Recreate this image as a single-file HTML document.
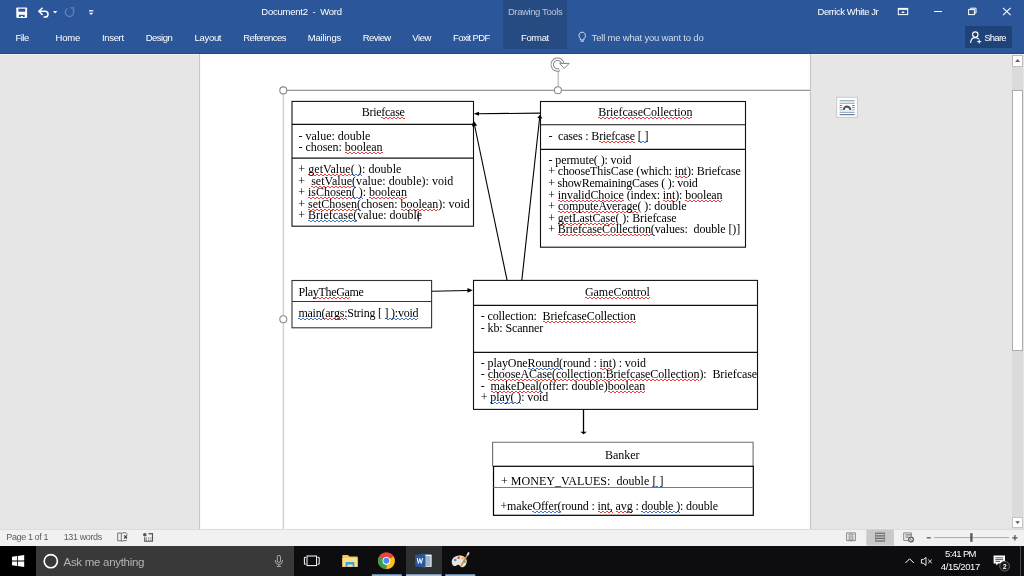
<!DOCTYPE html>
<html><head><meta charset="utf-8">
<style>
*{margin:0;padding:0;box-sizing:border-box}
html,body{width:1024px;height:576px;overflow:hidden;background:#e6e6e6;font-family:"Liberation Sans",sans-serif}
#ribbon{position:absolute;left:0;top:0;width:1024px;height:54px;background:linear-gradient(#2b579a 0,#2b579a 52.5px,#224a8b 52.9px,#224a8b 53.5px,#cfd6e2 54px)}
#hl{position:absolute;left:0;top:54px;width:1024px;height:1px;background:#f0f1f3}
#ribbon .t{position:absolute;color:#fff;font-size:9.5px;white-space:pre;line-height:12px}
#dt{position:absolute;left:503px;top:0;width:64px;height:48.5px;background:#264a82}
#share{position:absolute;left:965.2px;top:26.3px;width:46.6px;height:21.4px;background:#1f4378}
#page{position:absolute;left:200px;top:54px;width:610px;height:476px;background:#fff}
#status{position:absolute;left:0;top:529px;width:1024px;height:17px;background:#f1f1f1;border-top:1px solid #dcdcdc}
#status .t,#task .t{position:absolute;white-space:pre;line-height:12px;font-family:"Liberation Sans",sans-serif}
#task{position:absolute;left:0;top:546px;width:1024px;height:30px;background:#0d0d0f}
#start{position:absolute;left:0;top:0;width:36px;height:30px;background:#000}
#search{position:absolute;left:36px;top:0;width:258px;height:30px;background:#393939}
#wordbtn{position:absolute;left:406px;top:0;width:35.5px;height:30px;background:#2e2f31}
.uml{position:absolute;font-family:"Liberation Serif",serif;font-size:12px;line-height:12px;color:#000;white-space:pre}
.r{background:repeating-linear-gradient(90deg,#e2453c 0,#e2453c 2px,transparent 2px,transparent 4px) 0 12px/4px 1px repeat-x,repeating-linear-gradient(90deg,transparent 0,transparent 2px,#e2453c 2px,#e2453c 4px) 0 13px/4px 1px repeat-x}
.b{background:repeating-linear-gradient(90deg,#3f74d8 0,#3f74d8 2px,transparent 2px,transparent 4px) 0 12px/4px 1px repeat-x,repeating-linear-gradient(90deg,transparent 0,transparent 2px,#3f74d8 2px,#3f74d8 4px) 0 13px/4px 1px repeat-x}
svg{position:absolute;left:0;top:0}
#umltext,#ribbon,#status,#task{will-change:transform}
</style></head><body>
<div id="ribbon">
<div id="dt"></div>
<div id="share"></div>
<svg width="1024" height="54" viewBox="0 0 1024 54" id="rib">
<!-- save -->
<rect x="16.3" y="7.5" width="10.8" height="10.4" rx="0.8" fill="#fff"/>
<rect x="18.4" y="8.7" width="6.8" height="3" fill="#2b579a"/>
<rect x="18.9" y="14.8" width="5.8" height="2.2" fill="#2b579a"/>
<rect x="20.9" y="16" width="1.8" height="1" fill="#fff"/>
<!-- undo -->
<path d="M38.8 11.3 H45 A3 2.9 0 0 1 45 17.1 H43.6" fill="none" stroke="#fff" stroke-width="1.5"/>
<path d="M42.6 7.7 L38.9 11.3 L42.6 14.9" fill="none" stroke="#fff" stroke-width="1.5"/>
<path d="M53 10.9 H57.2 L55.1 13.6 Z" fill="#fff"/>
<!-- redo dim -->
<path d="M72.9 9.9 A4.2 4.2 0 1 1 67.6 8.5" fill="none" stroke="#5f80ba" stroke-width="1.3"/>
<path d="M70.2 7.8 H73.6 V11.2" fill="none" stroke="#5f80ba" stroke-width="1.3"/>
<!-- customize -->
<path d="M89 10.8 H93.3" stroke="#fff" stroke-width="1.2" fill="none"/>
<path d="M89 12.8 H93.3 L91.15 15.1 Z" fill="#fff"/>
<!-- ribbon display options -->
<rect x="898.3" y="8.4" width="9.4" height="6.2" fill="none" stroke="#fff" stroke-width="1"/>
<rect x="898" y="8" width="10" height="1.8" fill="#fff"/>
<path d="M901.2 12.9 L903 11 L904.8 12.9 Z" fill="#fff"/>
<!-- minimize -->
<path d="M934 11.5 H942" stroke="#fff" stroke-width="1"/>
<!-- restore -->
<rect x="968.6" y="9.6" width="5.8" height="5" fill="none" stroke="#fff" stroke-width="1"/>
<path d="M970.4 9.6 V8.2 H976 V13 H974.4" fill="none" stroke="#fff" stroke-width="1"/>
<!-- close -->
<path d="M1003 7.9 L1010.6 15.1 M1010.6 7.9 L1003 15.1" stroke="#fff" stroke-width="1.1" fill="none"/>
<!-- lightbulb -->
<path d="M580.4 38.6 C578 36.8 578.6 32.2 582.2 32.2 C585.8 32.2 586.4 36.8 584 38.6 V40 H580.4 Z" fill="none" stroke="#e6ecf6" stroke-width="0.9"/>
<path d="M580.7 41.3 H583.7" stroke="#e6ecf6" stroke-width="0.9"/>
<!-- share person -->
<circle cx="975.3" cy="34.6" r="2.7" fill="none" stroke="#fff" stroke-width="1.1"/>
<path d="M970.6 43 C970.8 39 973 37.6 975.3 37.6 C976.8 37.6 978 38.2 978.8 39.2" fill="none" stroke="#fff" stroke-width="1.1"/>
<path d="M977.2 41.6 H981.2 M979.2 39.6 V43.6" stroke="#fff" stroke-width="1" fill="none"/>
</svg>
<!--RT-->
<div class="t" style="left:261.3px;top:6.0px;font-size:9.5px;color:#fff;letter-spacing:-0.246px">Document2  -  Word</div>
<div class="t" style="left:507.9px;top:6.0px;font-size:9.5px;color:#b7c5dd;letter-spacing:-0.392px">Drawing Tools</div>
<div class="t" style="left:817.5px;top:6.1px;font-size:9.5px;color:#fff;letter-spacing:-0.423px">Derrick White Jr</div>
<div class="t" style="left:15.5px;top:31.9px;font-size:9.5px;color:#fff;letter-spacing:-0.528px">File</div>
<div class="t" style="left:55.5px;top:31.9px;font-size:9.5px;color:#fff;letter-spacing:-0.161px">Home</div>
<div class="t" style="left:102.0px;top:31.9px;font-size:9.5px;color:#fff;letter-spacing:-0.344px">Insert</div>
<div class="t" style="left:145.7px;top:31.9px;font-size:9.5px;color:#fff;letter-spacing:-0.513px">Design</div>
<div class="t" style="left:194.5px;top:31.9px;font-size:9.5px;color:#fff;letter-spacing:-0.305px">Layout</div>
<div class="t" style="left:243.2px;top:31.9px;font-size:9.5px;color:#fff;letter-spacing:-0.599px">References</div>
<div class="t" style="left:307.7px;top:31.9px;font-size:9.5px;color:#fff;letter-spacing:-0.170px">Mailings</div>
<div class="t" style="left:362.8px;top:31.9px;font-size:9.5px;color:#fff;letter-spacing:-0.543px">Review</div>
<div class="t" style="left:412.3px;top:31.9px;font-size:9.5px;color:#fff;letter-spacing:-0.455px">View</div>
<div class="t" style="left:453.1px;top:31.9px;font-size:9.5px;color:#fff;letter-spacing:-0.626px">Foxit PDF</div>
<div class="t" style="left:521.0px;top:31.9px;font-size:9.5px;color:#fff;letter-spacing:-0.382px">Format</div>
<div class="t" style="left:591.6px;top:31.9px;font-size:9.5px;color:#d3dcec;letter-spacing:-0.198px">Tell me what you want to do</div>
<div class="t" style="left:984.2px;top:32.1px;font-size:9.5px;color:#fff;letter-spacing:-0.732px">Share</div>
<!--/RT-->
</div>
<div id="hl"></div>
<div id="page"></div>

<svg width="1024" height="576" viewBox="0 0 1024 576" id="dia">
<path d="M199.6 54 V529 M810.4 54 V529" stroke="#bdbdbd" stroke-width="0.9"/>
<!-- canvas selection frame -->
<line x1="283" y1="90.4" x2="810" y2="90.4" stroke="#959595" stroke-width="1.1"/>
<line x1="283.4" y1="90" x2="283.4" y2="529" stroke="#d2d2d2" stroke-width="1.5"/>
<line x1="558.2" y1="71" x2="558.2" y2="87" stroke="#a8a8a8" stroke-width="1"/>
<circle cx="283.3" cy="90.4" r="3.5" fill="#fff" stroke="#8a8a8a" stroke-width="1.1"/>
<circle cx="557.9" cy="90.3" r="3.5" fill="#fff" stroke="#8a8a8a" stroke-width="1.1"/>
<circle cx="283.3" cy="319.3" r="3.5" fill="#fff" stroke="#8a8a8a" stroke-width="1.1"/>
<!-- rotate handle -->
<path d="M562.98 64.1 A5.4 5.4 0 1 0 559.45 69.67" fill="none" stroke="#858585" stroke-width="3.4"/>
<path d="M562.98 64.1 A5.4 5.4 0 1 0 559.45 69.67" fill="none" stroke="#fff" stroke-width="1.5"/>
<path d="M559.6 63.4 H569.2 L564.3 68.4 Z" fill="#fff" stroke="#858585" stroke-width="1"/>
<!-- text cursor -->
<path d="M418.3 211 V221.4" stroke="#000" stroke-width="0.9"/>
<!-- layout options icon -->
<rect x="836.7" y="97.3" width="20.7" height="20.1" fill="#fff" stroke="#c8c8c8" stroke-width="1"/>
<rect x="839.6" y="100.6" width="15.1" height="2.8" fill="#d6eef2"/>
<rect x="839.6" y="110.2" width="15.1" height="2.2" fill="#d6eef2"/>
<path d="M839.6 100.6 H854.7" stroke="#8fa0b6" stroke-width="0.9"/>
<path d="M839.6 103.4 H854.7" stroke="#9aa6b4" stroke-width="0.9"/>
<path d="M839.6 105.5 H842.2 M852.2 105.5 H854.7 M839.6 107.6 H842.2 M852.2 107.6 H854.7" stroke="#4d6a96" stroke-width="0.9"/>
<path d="M839.6 109.7 H842.2 M852.2 109.7 H854.7" stroke="#a0a8b4" stroke-width="0.9"/>
<path d="M839.6 112.5 H854.7" stroke="#9aa6b4" stroke-width="0.9"/>
<path d="M839.6 114.7 H854.7" stroke="#44628f" stroke-width="1"/>
<path d="M843.7 109.9 A3.3 3.3 0 0 1 850.3 109.9" fill="none" stroke="#555" stroke-width="2.1"/>
<!-- scrollbar -->
<rect x="1012" y="55" width="11" height="474" fill="#dbdbdb"/>
<rect x="1012.6" y="55.6" width="9.9" height="10.9" fill="#fff" stroke="#b0b0b0" stroke-width="0.8"/>
<path d="M1015.1 61.9 L1017.6 58.9 L1020.1 61.9 Z" fill="#606060"/>
<rect x="1012.5" y="90.5" width="10" height="260" fill="#fff" stroke="#ababab" stroke-width="1"/>
<rect x="1012.5" y="517.5" width="10" height="10" fill="#fff" stroke="#c4c4c4" stroke-width="1"/>
<path d="M1015.2 521.2 L1017.6 524 L1020 521.2 Z" fill="#606060"/>
<!-- Briefcase -->
<g fill="none" stroke="#111" stroke-width="1.1">
<rect x="292" y="101.4" width="181.5" height="124.8"/>
<line x1="292" y1="124.4" x2="473.5" y2="124.4"/>
<line x1="292" y1="158.1" x2="473.5" y2="158.1"/>
<!-- BriefcaseCollection -->
<rect x="540.5" y="101.5" width="205" height="145.7"/>
<line x1="540.5" y1="124.8" x2="745.5" y2="124.8"/>
<line x1="540.5" y1="149.4" x2="745.5" y2="149.4"/>
<!-- PlayTheGame -->
<rect x="292" y="280.5" width="139.6" height="47.3" stroke="#333"/>
<line x1="292" y1="301.5" x2="431.6" y2="301.5" stroke="#333"/>
<!-- GameControl -->
<rect x="473.5" y="280.4" width="284" height="129"/>
<line x1="473.5" y1="305.4" x2="757.5" y2="305.4"/>
<line x1="473.5" y1="352.4" x2="757.5" y2="352.4"/>
</g>
<!-- Banker -->
<path d="M492.6 466.2 V442.3 H753.1 V466.2" fill="none" stroke="#6e6e6e" stroke-width="1.1"/>
<rect x="493.5" y="466.3" width="259.8" height="49" fill="none" stroke="#000" stroke-width="1.2"/>
<line x1="493.5" y1="487.5" x2="753.3" y2="487.5" stroke="#7a7a7a" stroke-width="1"/>
<!-- arrows -->
<g stroke="#000" stroke-width="1.1" fill="#000">
<line x1="540.5" y1="113.1" x2="477" y2="113.75"/>
<path d="M473.7 113.75 L479 111.8 L479 115.7 Z" stroke="none"/>
<line x1="507.1" y1="280.4" x2="474.5" y2="125"/>
<path d="M473.5 120.6 L477.1 125.5 L471.9 126.5 Z" stroke="none"/>
<line x1="521.8" y1="280.4" x2="539.6" y2="118"/>
<path d="M540.1 114.5 L542.3 118.6 L537.3 118.1 Z" stroke="none"/>
<line x1="431.6" y1="291.2" x2="468" y2="290.45"/>
<path d="M472.7 290.35 L467.4 288.1 L467.5 292.7 Z" stroke="none"/>
<line x1="583.5" y1="409.5" x2="583.5" y2="432.4" stroke-width="1.3"/>
<path d="M580.3 431.7 H586.9 L583.6 434.3 Z" stroke="none"/>
</g>
</svg>
<div id="umltext">
<!--UT-->
<div class="uml" style="left:361.8px;top:106.0px;letter-spacing:-0.281px">Brie<span class="r">fcase</span></div>
<div class="uml" style="left:298.6px;top:130.0px;letter-spacing:-0.019px">- value: double</div>
<div class="uml" style="left:298.6px;top:141.0px;letter-spacing:-0.044px">- chosen: <span class="r">boolean</span></div>
<div class="uml" style="left:298.3px;top:163.0px;letter-spacing:0.068px">+ <span class="r">getValue</span><span class="b">( )</span>: double</div>
<div class="uml" style="left:298.3px;top:175.0px;letter-spacing:0.031px">+  <span class="r">setValue</span><span class="b">(</span>value: double): void</div>
<div class="uml" style="left:298.3px;top:186.0px;letter-spacing:-0.025px">+ <span class="r">isChosen</span><span class="b">( )</span>: <span class="r">boolean</span></div>
<div class="uml" style="left:298.3px;top:198.0px;letter-spacing:-0.028px">+ <span class="r">setChosen</span><span class="b">(</span>chosen: <span class="r">boolean</span>): void</div>
<div class="uml" style="left:298.3px;top:209.0px;letter-spacing:-0.007px">+ <span class="b">Briefcase(</span>value: double</div>
<div class="uml" style="left:598.2px;top:106.0px;letter-spacing:-0.058px"><span class="r">BriefcaseCollection</span></div>
<div class="uml" style="left:548.6px;top:130.0px;letter-spacing:-0.178px">-  cases : B<span class="r">riefcase</span> <span class="b">[ ]</span></div>
<div class="uml" style="left:548.6px;top:154.0px;letter-spacing:-0.116px">- permute( ): void</div>
<div class="uml" style="left:548.3px;top:165.0px;letter-spacing:-0.158px">+ chooseThisCase (which: <span class="r">int</span>): Briefcase</div>
<div class="uml" style="left:548.3px;top:177.0px;letter-spacing:-0.277px">+ showRemainingCases ( ): void</div>
<div class="uml" style="left:548.3px;top:189.0px;letter-spacing:-0.106px">+ <span class="r">invalidChoice</span> (index: <span class="r">int</span>): <span class="r">boolean</span></div>
<div class="uml" style="left:548.3px;top:200.0px;letter-spacing:-0.102px">+ <span class="r">computeAverage</span>( ): double</div>
<div class="uml" style="left:548.3px;top:212.0px;letter-spacing:-0.103px">+ <span class="r">getLastCase</span>( ): Briefcase</div>
<div class="uml" style="left:548.3px;top:223.0px;letter-spacing:-0.122px">+ <span class="r">BriefcaseCollection</span><span class="b">(</span>values:  double [)]</div>
<div class="uml" style="left:298.4px;top:286.0px;letter-spacing:-0.316px">Pla<span class="r">yTheGa</span>me</div>
<div class="uml" style="left:298.4px;top:307.0px;letter-spacing:-0.227px"><span class="b">main(</span><span class="r">args</span><span class="b">:</span>String [ <span class="b">] ):void</span></div>
<div class="uml" style="left:584.9px;top:286.0px;letter-spacing:-0.030px"><span class="r">GameControl</span></div>
<div class="uml" style="left:480.8px;top:310.0px;letter-spacing:-0.125px">- collection:  <span class="r">BriefcaseCollection</span></div>
<div class="uml" style="left:480.8px;top:322.0px;letter-spacing:-0.122px">- kb: Scanner</div>
<div class="uml" style="left:480.8px;top:357.0px;letter-spacing:-0.098px">- playOne<span class="b">Round(</span>round : <span class="r">int</span>) : void</div>
<div class="uml" style="left:480.8px;top:368.0px;letter-spacing:-0.083px">- <span class="r">chooseACase(collection:BriefcaseCollection</span>):  Briefcase</div>
<div class="uml" style="left:480.8px;top:380.0px;letter-spacing:-0.071px">-  <span class="r">makeDeal</span><span class="b">(</span>offer: double)<span class="r">boolean</span></div>
<div class="uml" style="left:480.8px;top:391.0px;letter-spacing:-0.114px">+ <span class="b">play( )</span>: void</div>
<div class="uml" style="left:605.1px;top:449.0px;letter-spacing:-0.059px">Banker</div>
<div class="uml" style="left:501.0px;top:475.0px;letter-spacing:0.035px">+ MONEY_VALUES:  double <span class="b">[ ]</span></div>
<div class="uml" style="left:500.4px;top:500.0px;letter-spacing:-0.139px">+make<span class="b">Offer(</span>round : <span class="r">int,</span> <span class="r">avg</span> : <span class="b">double )</span>: double</div>
<!--/UT-->
</div>
<div id="status">
<svg width="1024" height="17" viewBox="0 529 1024 17" style="top:-1px">
<!-- proofing book -->
<g fill="none" stroke="#666" stroke-width="0.9">
<path d="M117.7 533 H121.3 V540.8 H117.7 Z"/>
<path d="M121.3 540.8 L122 541.6 L122.8 540.6 H126.8"/>
<path d="M121.6 533.4 Q124 532 126.4 533 Q127 533.4 127 534.6"/>
<path d="M124.2 535.4 L127 538.5 M127 535.4 L124.2 538.5" stroke="#444" stroke-width="1.25"/>
</g>
<!-- macro -->
<circle cx="144.8" cy="534.7" r="1.8" fill="#555"/>
<rect x="148.5" y="533.1" width="4.5" height="1.3" fill="#555"/>
<path d="M144.7 537.2 V541.3 H152.5 V533.6" fill="none" stroke="#555" stroke-width="1.1"/>
<g fill="#555"><rect x="146" y="537.5" width="1" height="1.1"/><rect x="148.2" y="537.5" width="1" height="1.1"/><rect x="150.4" y="537.5" width="1" height="1.1"/><rect x="146" y="539.6" width="1" height="1.1"/><rect x="148.2" y="539.6" width="1" height="1.1"/><rect x="150.4" y="539.6" width="1" height="1.1"/></g>
<!-- read mode -->
<g fill="none" stroke="#7a7a7a" stroke-width="0.9">
<path d="M846.6 532.9 H855.4 V540.6 H846.6 Z"/>
<path d="M851 532.9 V541.6"/>
<path d="M848.4 534.8 H850 M848.4 537 H850 M848.4 539.1 H850 M852 534.8 H853.6 M852 537 H853.6 M852 539.1 H853.6" stroke="#5a5a5a" stroke-width="0.9"/>
</g>
<!-- print layout selected -->
<rect x="866.3" y="529.6" width="27.6" height="16" fill="#c9c9c9"/>
<rect x="875.5" y="533.2" width="9.3" height="7.8" fill="none" stroke="#8a8a8a" stroke-width="0.7"/>
<path d="M875.2 533.2 H885 M875.2 535.8 H885 M875.2 538.4 H885 M875.2 541 H885" stroke="#666" stroke-width="1.15" fill="none"/>
<!-- web layout -->
<g fill="none" stroke="#7a7a7a" stroke-width="0.9">
<path d="M911.4 536.4 V532.9 H903.7 V540.4 H908"/>
<path d="M905.4 534.9 H911 M905.4 537.1 H908.6" stroke="#5a5a5a" stroke-width="0.95"/>
<circle cx="911" cy="539.6" r="2.4" fill="#f1f1f1" stroke="#555" stroke-width="1.15"/>
<path d="M909.4 538 L912.6 541.2" stroke="#555" stroke-width="0.9"/>
</g>
<!-- zoom -->
<path d="M926.8 537.8 H930.8" stroke="#555" stroke-width="1.3"/>
<path d="M934.2 537.6 H1009" stroke="#a8a8a8" stroke-width="1"/>
<rect x="970.2" y="533.2" width="2.4" height="8.6" fill="#5a5a5a"/>
<path d="M1012.2 537.8 H1017.6 M1014.9 535.1 V540.5" stroke="#555" stroke-width="1.3"/>
</svg>
<!--ST-->
<div class="t" style="left:6.3px;top:1.2px;font-size:9px;color:#5c5c5c;letter-spacing:-0.386px">Page 1 of 1</div>
<div class="t" style="left:63.7px;top:1.2px;font-size:9px;color:#5c5c5c;letter-spacing:-0.370px">131 words</div>
<!--/ST-->
</div>
<div id="task"><div id="start"></div><div id="search"></div><div id="wordbtn"></div>
<svg width="1024" height="30" viewBox="0 546 1024 30">
<!-- windows logo -->
<g fill="#fff">
<path d="M12 556.8 L17 556.1 V560.6 H12 Z"/>
<path d="M17.8 556 L24.2 555 V560.6 H17.8 Z"/>
<path d="M12 561.4 H17 V565.9 L12 565.2 Z"/>
<path d="M17.8 561.4 H24.2 V567 L17.8 566 Z"/>
</g>
<!-- cortana -->
<circle cx="50.8" cy="561.2" r="6.6" fill="none" stroke="#fff" stroke-width="1.6"/>
<!-- mic -->
<g fill="none" stroke="#b4b4b4" stroke-width="0.9">
<rect x="277.3" y="555.4" width="3.2" height="7" rx="1.5"/>
<path d="M275.4 560 V561 A3.5 3.5 0 0 0 282.4 561 V560"/>
<path d="M278.9 564.6 V566.4 M276.8 566.4 H281"/>
</g>
<!-- task view -->
<g fill="none" stroke="#fff" stroke-width="1">
<rect x="307" y="556" width="9.6" height="9.6"/>
<path d="M306 557.4 H304.4 V564.2 H306 M317.6 557.4 H319.2 V564.2 H317.6"/>
</g>
<!-- file explorer -->
<path d="M342.4 555 H348 L349.4 556.4 H357.6 V566.8 H342.4 Z" fill="#f5c84c"/>
<path d="M342.4 557.8 H357.6 V566.8 H342.4 Z" fill="#fbe08a"/>
<path d="M345.6 562 H354.4 V566.8 H345.6 Z" fill="#3d9fe0"/>
<path d="M347.4 564.4 H352.6 V566.8 H347.4 Z" fill="#fbe08a"/>
<!-- chrome -->
<circle cx="386.4" cy="560.8" r="8.4" fill="#e8453c"/>
<path d="M386.4 560.8 L379.13 565 A8.4 8.4 0 0 1 379.13 556.6 Z" fill="#e8453c"/>
<path d="M386.4 560.8 L393.67 556.6 A8.4 8.4 0 0 1 386.4 569.2 Z" fill="#fbc116"/>
<path d="M386.4 560.8 L386.4 569.2 A8.4 8.4 0 0 1 379.13 556.6 Z" fill="#34a24f"/>
<path d="M379.13 556.6 A8.4 8.4 0 0 1 393.67 556.6 L386.4 556.6 Z" fill="#e8453c"/>
<circle cx="386.4" cy="560.8" r="3.9" fill="#fff"/>
<circle cx="386.4" cy="560.8" r="3" fill="#4a8af4"/>
<!-- word -->
<rect x="422" y="554.6" width="9.6" height="12.2" fill="#fff"/>
<path d="M424.6 557 H430.6 M424.6 559 H430.6 M424.6 561 H430.6 M424.6 563 H430.6 M424.6 565 H430.6" stroke="#2b579a" stroke-width="0.9"/>
<path d="M415.2 555 L425.4 553.6 V567.8 L415.2 566.4 Z" fill="#2b579a"/>
<path d="M417.2 558 L418.4 563.4 L419.8 558.6 L421.2 563.4 L422.6 558" fill="none" stroke="#fff" stroke-width="1"/>
<!-- paint -->
<path d="M452 563.4 C450.6 558.6 455.6 554.6 461 555.6 C466.4 556.6 468.4 561.6 465.4 565.4 C463.4 567.8 460.6 567.6 459.8 565.8 C459.2 564.2 457.6 564.6 456.4 565.6 C454.8 566.8 452.6 565.8 452 563.4 Z" fill="#e9e6dd"/>
<circle cx="455.2" cy="560" r="1.3" fill="#4a8bd6"/><circle cx="458.6" cy="557.8" r="1.3" fill="#e2453c"/><circle cx="462.6" cy="558.2" r="1.3" fill="#f2b632"/><circle cx="464.4" cy="561.6" r="1.3" fill="#4aa85a"/>
<path d="M468.6 552.8 L461 566.2" stroke="#c98a4a" stroke-width="1.6"/>
<path d="M468.9 552.4 L467.4 555.4" stroke="#ddd" stroke-width="1.8"/>
<!-- underlines -->
<rect x="371.8" y="574.3" width="30" height="1.7" fill="#8cb7e4"/>
<rect x="406" y="574.3" width="35.5" height="1.7" fill="#9cc4ec"/>
<rect x="445.2" y="574.3" width="30" height="1.7" fill="#8cb7e4"/>
<!-- tray -->
<path d="M905.4 563 L909.6 558.8 L913.8 563" fill="none" stroke="#fff" stroke-width="1"/>
<path d="M921.4 559.6 H923.2 L926 557.4 V565.4 L923.2 563.2 H921.4 Z" fill="none" stroke="#fff" stroke-width="0.9"/>
<path d="M928.2 559.6 L931.8 563.2 M931.8 559.6 L928.2 563.2" stroke="#fff" stroke-width="0.9"/>
<!-- notifications -->
<path d="M993.6 555.6 H1005 V563.4 H998.4 L996.2 565.6 V563.4 H993.6 Z" fill="#fff"/>
<path d="M995.4 557.8 H1003.2 M995.4 559.6 H1003.2 M995.4 561.4 H1000" stroke="#111" stroke-width="0.7"/>
<circle cx="1004.6" cy="566.2" r="4.9" fill="#1a1a1a" stroke="#6e6e6e" stroke-width="0.9"/>
<text x="1004.6" y="568.8" font-family="Liberation Sans" font-size="7" fill="#fff" text-anchor="middle" font-weight="bold">2</text>
<path d="M1020.5 546 V576" stroke="#555" stroke-width="0.8"/>
</svg>
<!--TT-->
<div class="t" style="left:63.5px;top:9.6px;font-size:11.5px;color:#b4b4b4;letter-spacing:-0.288px">Ask me anything</div>
<div class="t" style="left:945.0px;top:2.1px;font-size:9.5px;color:#fff;letter-spacing:-0.642px">5:41 PM</div>
<div class="t" style="left:940.8px;top:15.3px;font-size:9.5px;color:#fff;letter-spacing:-0.341px">4/15/2017</div>
<!--/TT-->
</div>
</body></html>
